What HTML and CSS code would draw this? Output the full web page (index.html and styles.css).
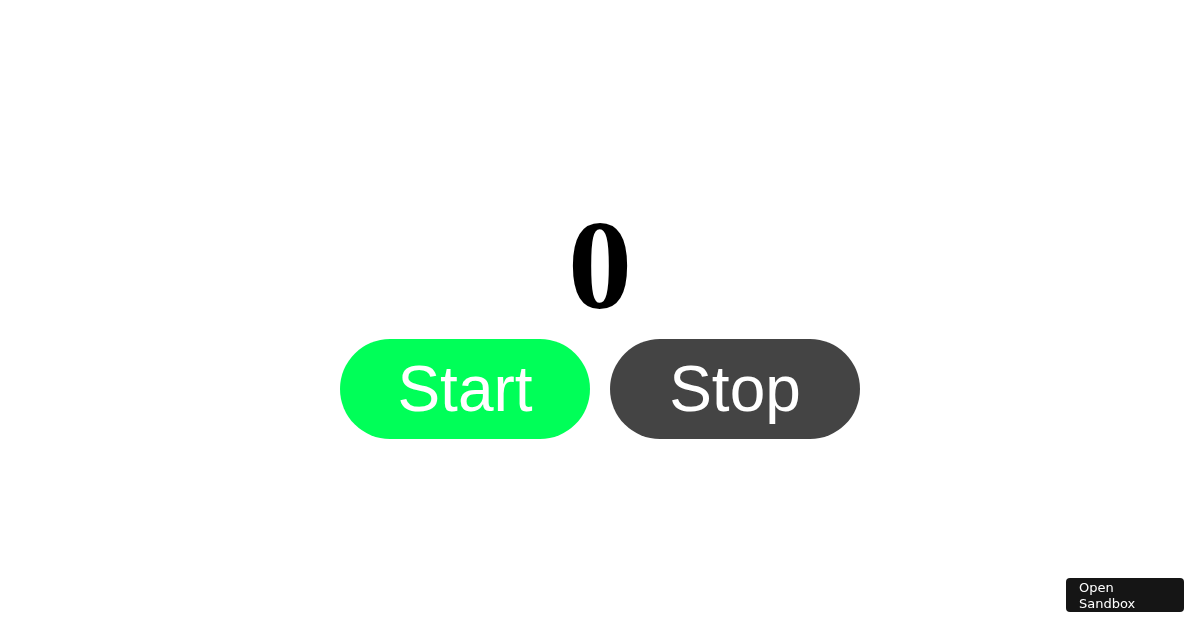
FILE: index.html
```html
<!DOCTYPE html>
<html lang="en">
<head>
  <meta charset="UTF-8" />
  <meta name="viewport" content="width=device-width, initial-scale=1.0"/>
  <title>Counter</title>
  <link rel="stylesheet" href="styles.css">
</head>
<body>

<div class="app">
  <h1 class="count" id="count">0</h1>
  <div class="controls">
    <button class="btn start" id="startBtn">Start</button>
    <button class="btn stop" id="stopBtn">Stop</button>
  </div>
</div>

<a class="sandbox-link" href="#">Open Sandbox</a>

</body>
</html>
```

FILE: styles.css
```css
body {
  margin: 0;
  background: #fff;
  font-family: "Liberation Serif", serif;
}

.app {
  height: 100vh;
  display: flex;
  flex-direction: column;
  align-items: center;
  justify-content: center;
}

.count {
  margin: 0;
  font-size: 128px;
  font-weight: bold;
  color: #000;
}

.controls {
  display: flex;
  gap: 20px;
}

.btn {
  width: 250px;
  height: 100px;
  border: none;
  border-radius: 50px;
  color: #fff;
  font-family: "Liberation Sans", Arial, sans-serif;
  font-size: 64px;
  cursor: pointer;
}

.start {
  background: #00ff58;
}

.stop {
  background: #444;
}

/* little floating link in the corner */
.sandbox-link {
  position: fixed;
  right: 16px;
  bottom: 18px;
  width: 118px;
  height: 34px;
  box-sizing: border-box;
  padding: 2px 13px 0;
  background: #151515;
  border-radius: 4px;
  color: #fff;
  font-family: "DejaVu Sans", sans-serif;
  font-size: 13px;
  line-height: 16px;
  text-decoration: none;
  word-spacing: 60px;
}
```
